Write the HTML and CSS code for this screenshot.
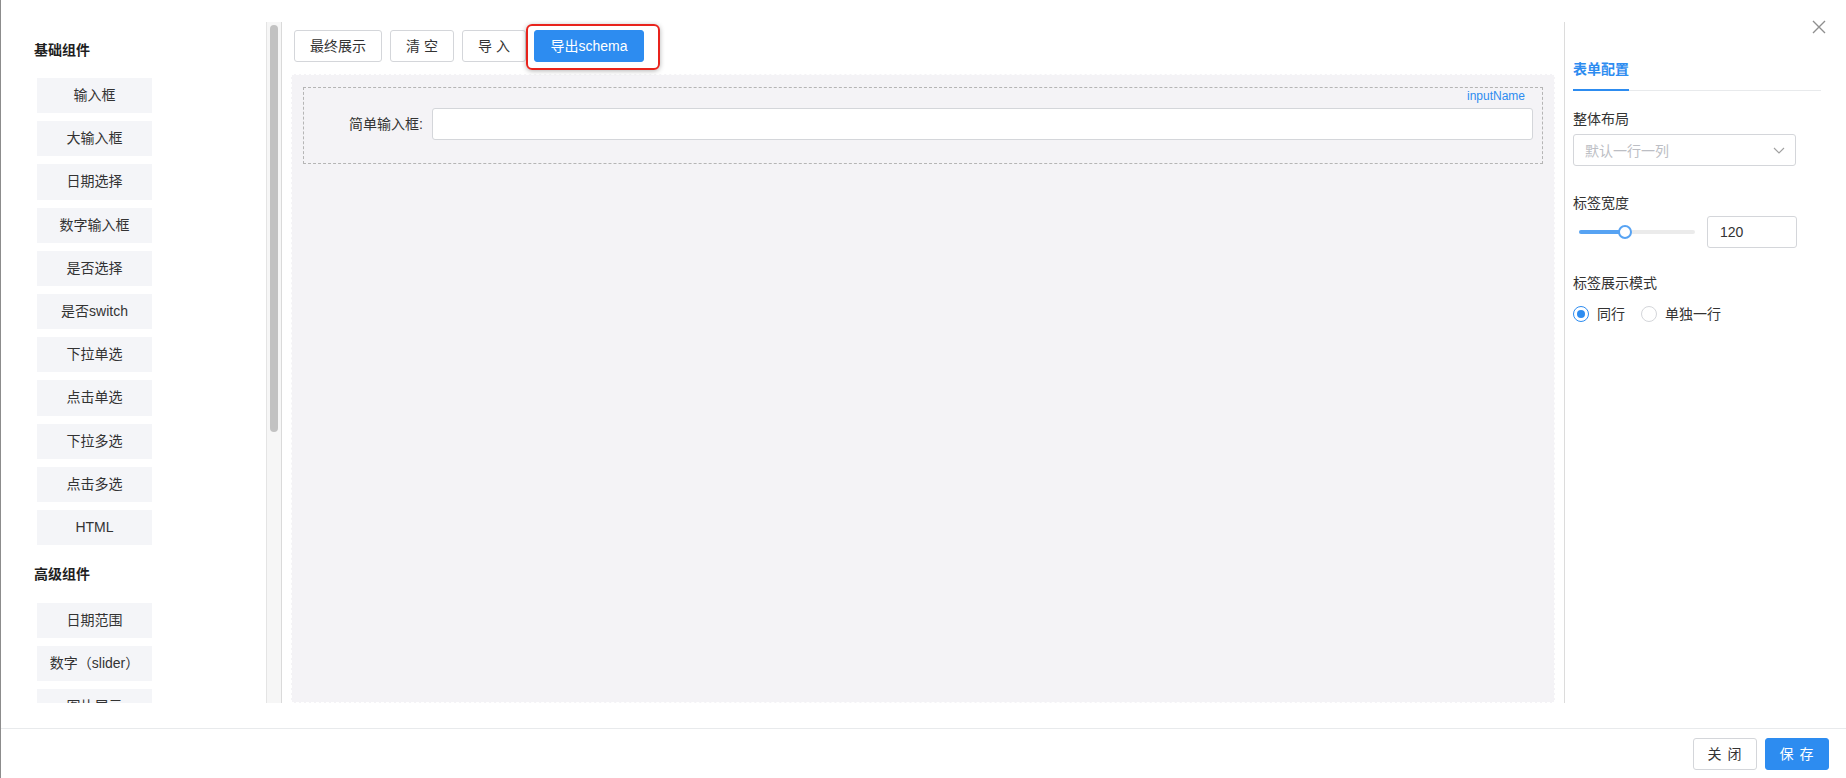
FILE: index.html
```html
<!DOCTYPE html>
<html lang="zh">
<head>
<meta charset="utf-8">
<title>表单设计器</title>
<link rel="stylesheet" href="styles.css">
</head>
<body>
<div class="modal">
  <button class="close-btn" aria-label="关闭">
    <svg width="14" height="14" viewBox="0 0 14 14"><path d="M1 1 L13 13 M13 1 L1 13" stroke="#8f8f8f" stroke-width="1.4" fill="none"/></svg>
  </button>
  <div class="modal-body">
    <aside class="sidebar">
      <div class="group">
        <div class="group-title">基础组件</div>
        <div class="comp">输入框</div>
        <div class="comp">大输入框</div>
        <div class="comp">日期选择</div>
        <div class="comp">数字输入框</div>
        <div class="comp">是否选择</div>
        <div class="comp">是否switch</div>
        <div class="comp">下拉单选</div>
        <div class="comp">点击单选</div>
        <div class="comp">下拉多选</div>
        <div class="comp">点击多选</div>
        <div class="comp">HTML</div>
      </div>
      <div class="group group-adv">
        <div class="group-title">高级组件</div>
        <div class="comp">日期范围</div>
        <div class="comp">数字（slider）</div>
        <div class="comp">图片展示</div>
      </div>
    </aside>
    <div class="scrollbar"><div class="thumb"></div></div>
    <main class="main">
      <div class="toolbar">
        <button class="btn w88">最终展示</button>
        <button class="btn w64">清 空</button>
        <button class="btn w64">导 入</button>
        <span class="highlight"><button class="btn btn-primary w110">导出schema</button></span>
      </div>
      <div class="canvas">
        <div class="field-box">
          <span class="field-name">inputName</span>
          <div class="form-row">
            <label class="form-label">简单输入框:</label>
            <div class="text-input"></div>
          </div>
        </div>
      </div>
    </main>
    <section class="panel">
      <div class="tabs"><span class="tab">表单配置</span></div>
      <div class="cfg-label first">整体布局</div>
      <div class="select">
        <span class="placeholder">默认一行一列</span>
        <svg class="chev" width="12" height="7" viewBox="0 0 12 7"><path d="M1 1 L6 6 L11 1" stroke="#a0a0a0" stroke-width="1.1" fill="none"/></svg>
      </div>
      <div class="cfg-label second">标签宽度</div>
      <div class="slider-row">
        <div class="slider">
          <div class="slider-fill" style="width:46px"></div>
          <div class="slider-handle" style="left:46px"></div>
        </div>
        <div class="num-input">120</div>
      </div>
      <div class="cfg-label third">标签展示模式</div>
      <div class="radio-row">
        <span class="radio checked"></span><span class="radio-text">同行</span>
        <span class="radio"></span><span class="radio-text">单独一行</span>
      </div>
    </section>
  </div>
  <footer class="footer">
    <button class="btn w64 spaced">关 闭</button>
    <button class="btn btn-primary w64 spaced">保 存</button>
  </footer>
</div>
</body>
</html>
```

FILE: styles.css
```css
* { box-sizing: border-box; }
html, body { margin: 0; padding: 0; }
body {
  width: 1846px;
  height: 778px;
  overflow: hidden;
  background: #fff;
  font-family: "Liberation Sans", "Noto Sans CJK SC", sans-serif;
  font-size: 14px;
  color: #333;
}
.modal {
  position: relative;
  height: 778px;
  display: flex;
  flex-direction: column;
  border-left: 1px solid #8c8c8c;
}
.close-btn {
  position: absolute;
  left: 1810px;
  top: 19px;
  width: 16px;
  height: 16px;
  padding: 1px;
  border: 0;
  background: none;
}
.modal-body {
  height: 728px;
  display: flex;
  padding: 22px 0 25px;
}

/* sidebar */
.sidebar {
  width: 265px;
  height: 681px;
  overflow: hidden;
  padding: 18px 0 0 33px;
}
.group-title {
  font-weight: bold;
  line-height: 20px;
  color: #1f1f1f;
  margin-bottom: 18px;
}
.group-adv .group-title { margin-top: 19px; margin-bottom: 19px; }
.comp {
  width: 115px;
  height: 35.2px;
  margin: 0 0 8px 3px;
  background: #f4f5f8;
  text-align: center;
  line-height: 35px;
  color: #333;
}
.scrollbar {
  width: 16px;
  height: 681px;
  background: #f6f6f6;
  border-left: 1px solid #e4e4e4;
  border-right: 1px solid #dadada;
  padding: 3px 0 0 3px;
}
.thumb {
  width: 8px;
  height: 407px;
  border-radius: 4px;
  background: #c2c2c2;
}

/* main */
.main {
  width: 1282px;
  height: 681px;
  padding: 0 9px;
  display: flex;
  flex-direction: column;
}
.toolbar {
  display: flex;
  gap: 8px;
  padding: 8px 0 0 3px;
}
.btn {
  height: 32px;
  padding: 0;
  border: 1px solid #d4d6da;
  border-radius: 3px;
  background: #fff;
  font-family: "Liberation Sans", "Noto Sans CJK SC", sans-serif;
  font-size: 14px;
  color: #333;
  line-height: 30px;
}
.btn-primary {
  background: #2d8cf0;
  border-color: #2d8cf0;
  color: #fff;
}
.w88 { width: 88px; }
.w64 { width: 64px; }
.w110 { width: 110px; }
.spaced { letter-spacing: 1px; }
.highlight {
  position: relative;
  display: inline-block;
  height: 32px;
}
.highlight::after {
  content: "";
  position: absolute;
  left: -8px;
  top: -6px;
  right: -16px;
  bottom: -8px;
  border: 2px solid #e8231c;
  border-radius: 6px;
  box-shadow: 0 1px 5px rgba(0,0,0,0.3);
}
.canvas {
  margin-top: 12px;
  flex: 1;
  background: #f4f3f6;
  border: 1px dashed #fff;
  padding: 12px 11px;
}
.field-box {
  position: relative;
  border: 1px dashed #b5b5b5;
  padding: 20px 9px 23px 8px;
}
.field-name {
  position: absolute;
  top: 0;
  right: 17px;
  font-size: 12px;
  line-height: 16px;
  color: #2d8cf0;
}
.form-row {
  display: flex;
}
.form-label {
  width: 120px;
  text-align: right;
  padding-right: 9px;
  line-height: 32px;
  color: #333;
}
.text-input {
  flex: 1;
  height: 32px;
  border: 1px solid #d4d6da;
  border-radius: 3px;
  background: #fff;
}

/* right panel */
.panel {
  width: 282px;
  height: 681px;
  border-left: 1px solid #dcdcdc;
  padding: 37px 25px 0 8px;
}
.tabs {
  border-bottom: 1px solid #e8eaec;
}
.tab {
  position: relative;
  display: inline-block;
  line-height: 20px;
  padding-bottom: 11px;
  font-weight: bold;
  color: #2d8cf0;
}
.tab::after {
  content: "";
  position: absolute;
  left: 0;
  right: 0;
  bottom: -1px;
  height: 2px;
  background: #2d8cf0;
}
.cfg-label {
  line-height: 20px;
  color: #333;
}
.cfg-label.first { margin-top: 18px; margin-bottom: 5px; }
.cfg-label.second { margin-top: 27px; margin-bottom: 3px; }
.cfg-label.third { margin-top: 25px; margin-bottom: 11px; }
.select {
  width: 223px;
  height: 32px;
  border: 1px solid #d4d6da;
  border-radius: 3px;
  display: flex;
  align-items: center;
  justify-content: space-between;
  padding: 0 10px 0 11px;
}
.placeholder { color: #bcbec4; }
.chev { margin-top: 1px; }
.slider-row {
  display: flex;
  align-items: center;
}
.slider {
  position: relative;
  width: 116px;
  height: 4px;
  margin-left: 6px;
  border-radius: 2px;
  background: #ebebeb;
}
.slider-fill {
  height: 4px;
  border-radius: 2px;
  background: #57a3f3;
}
.slider-handle {
  position: absolute;
  top: -5px;
  width: 14px;
  height: 14px;
  margin-left: -7px;
  border: 2px solid #57a3f3;
  border-radius: 50%;
  background: #fff;
}
.num-input {
  width: 90px;
  height: 32px;
  margin-left: 12px;
  border: 1px solid #d4d6da;
  border-radius: 3px;
  padding-left: 12px;
  line-height: 30px;
  color: #333;
}
.radio-row {
  display: flex;
  align-items: center;
  height: 20px;
}
.radio {
  position: relative;
  width: 16px;
  height: 16px;
  border: 1px solid #d4d6da;
  border-radius: 50%;
  background: #fff;
}
.radio.checked { border-color: #2d8cf0; }
.radio.checked::after {
  content: "";
  position: absolute;
  left: 3px;
  top: 3px;
  width: 8px;
  height: 8px;
  border-radius: 50%;
  background: #2d8cf0;
}
.radio-text {
  margin-left: 8px;
  margin-right: 16px;
  line-height: 20px;
}

/* footer */
.footer {
  height: 50px;
  border-top: 1px solid #e8eaec;
  display: flex;
  justify-content: flex-end;
  gap: 8px;
  padding: 9px 17px 0 0;
}
```
